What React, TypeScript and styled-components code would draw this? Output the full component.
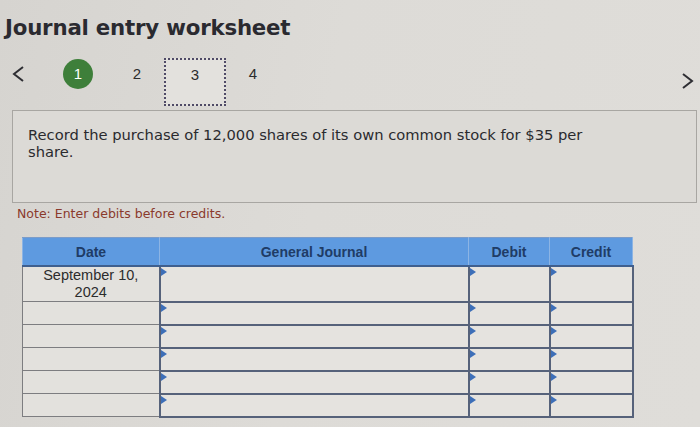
import React from 'react';
import styled, { createGlobalStyle } from 'styled-components';

const GlobalStyle = createGlobalStyle`
  html, body {
    margin: 0;
    padding: 0;
    background: #dbd9d5;
  }
  body {
    width: 700px;
    height: 427px;
    overflow: hidden;
    background: linear-gradient(100deg, #d6d4d0 0%, #dddbd7 45%, #dfddd9 100%);
  }
`;

const Page = styled.div`
  padding: 15px 0 0 0;
  color: #2b2b2f;
  font-family: 'DejaVu Sans', Verdana, sans-serif;
`;

const Title = styled.h1`
  margin: 0 0 0 5px;
  font-size: 21.3px;
  line-height: 26px;
  font-weight: bold;
  color: #2a2a30;
  letter-spacing: -0.2px;
`;

const NavRow = styled.div`
  display: flex;
  align-items: flex-start;
  height: 48px;
  margin-top: 17px;
  padding-left: 12px;
  padding-right: 5px;
`;

const Gap = styled.div<{ $w: number }>`
  width: ${(p) => p.$w}px;
  flex-shrink: 0;
`;

const Arrow = styled.div<{ $right?: boolean }>`
  width: 14px;
  height: 32px;
  display: flex;
  align-items: center;
  margin-top: ${(p) => (p.$right ? '7px' : '0')};
  margin-left: ${(p) => (p.$right ? 'auto' : '0')};
`;

const Step = styled.div<{ $active?: boolean; $focused?: boolean }>`
  width: ${(p) => (p.$focused ? '58px' : '30px')};
  height: ${(p) => (p.$focused ? '38px' : '30px')};
  margin-top: ${(p) => (p.$focused ? '0' : '1px')};
  display: flex;
  justify-content: center;
  align-items: ${(p) => (p.$focused ? 'flex-start' : 'center')};
  padding-top: ${(p) => (p.$focused ? '6px' : '0')};
  border-radius: ${(p) => (p.$active ? '50%' : '0')};
  background: ${(p) => (p.$active ? '#3e7f3a' : p.$focused ? '#e3e1dd' : 'transparent')};
  color: ${(p) => (p.$active ? '#ffffff' : '#2c2c2c')};
  border: ${(p) => (p.$focused ? '2px dotted #4f4a66' : 'none')};
  font-family: 'Liberation Sans', Arial, sans-serif;
  font-size: 15px;
  line-height: 18px;
`;

const DescBox = styled.div`
  margin: 4px 3px 0 12px;
  height: 93px;
  box-sizing: border-box;
  border: 1px solid #a8a6a2;
  padding: 15px 90px 0 15px;
  font-size: 14.7px;
  line-height: 17px;
  color: #2a2a2e;
  background: #dcdad6;
`;

const Note = styled.div`
  margin: 4px 0 0 17px;
  font-size: 12.5px;
  line-height: 14px;
  color: #8a3a2c;
`;

const Table = styled.table`
  margin: 16px 0 0 22px;
  border-collapse: collapse;
  font-family: 'Liberation Sans', Arial, sans-serif;
`;

const HeadCell = styled.th<{ $w: number }>`
  width: ${(p) => p.$w}px;
  height: 27px;
  padding: 0;
  background: #5e9ae0;
  color: #1f3c66;
  font-size: 14px;
  font-weight: bold;
  text-align: center;
  border-left: 1px solid #8cb4e4;
  border-right: 1px solid #8cb4e4;
  border-bottom: 2px solid #3f5f8e;
  border-top: 1px solid #7c9cc8;
`;

const DateCell = styled.td<{ $tall?: boolean }>`
  height: ${(p) => (p.$tall ? '32px' : '22px')};
  padding: 0;
  vertical-align: top;
  text-align: center;
  font-size: 14.5px;
  line-height: 17px;
  color: #2c2c2c;
  background: #e3e1dd;
  border: 1px solid #7d7d80;
`;

const InputCell = styled.td`
  position: relative;
  padding: 0;
  background: #e5e3df;
  border: 2px solid #56627a;
`;

const Marker = styled.span`
  position: absolute;
  left: 0;
  top: 1px;
  width: 0;
  height: 0;
  border-top: 4px solid transparent;
  border-bottom: 4px solid transparent;
  border-left: 6px solid #3d6fb8;
`;

const Chevron = ({ right }: { right?: boolean }) => (
  <svg width="13" height="18" viewBox="0 0 13 18">
    <polyline
      points={right ? '2,2 11,9 2,16' : '11,2 2,9 11,16'}
      fill="none"
      stroke="#2e2e33"
      strokeWidth="2"
    />
  </svg>
);

const rows = [
  { date: ['September 10,', '2024'] },
  { date: [] },
  { date: [] },
  { date: [] },
  { date: [] },
  { date: [] },
];

export default function App() {
  return (
    <>
      <GlobalStyle />
      <Page>
        <Title>Journal entry worksheet</Title>
        <NavRow>
          <Arrow>
            <Chevron />
          </Arrow>
          <Gap $w={37} />
          <Step $active>1</Step>
          <Gap $w={29} />
          <Step>2</Step>
          <Gap $w={12} />
          <Step $focused>3</Step>
          <Gap $w={12} />
          <Step>4</Step>
          <Arrow $right>
            <Chevron right />
          </Arrow>
        </NavRow>
        <DescBox>
          Record the purchase of 12,000 shares of its own common stock for $35 per share.
        </DescBox>
        <Note>Note: Enter debits before credits.</Note>
        <Table>
          <thead>
            <tr>
              <HeadCell $w={136}>Date</HeadCell>
              <HeadCell $w={308}>General Journal</HeadCell>
              <HeadCell $w={80}>Debit</HeadCell>
              <HeadCell $w={82}>Credit</HeadCell>
            </tr>
          </thead>
          <tbody>
            {rows.map((r, i) => (
              <tr key={i}>
                <DateCell $tall={i === 0}>
                  {r.date.map((l) => (
                    <div key={l}>{l}</div>
                  ))}
                </DateCell>
                <InputCell>
                  <Marker />
                </InputCell>
                <InputCell>
                  <Marker />
                </InputCell>
                <InputCell>
                  <Marker />
                </InputCell>
              </tr>
            ))}
          </tbody>
        </Table>
      </Page>
    </>
  );
}
